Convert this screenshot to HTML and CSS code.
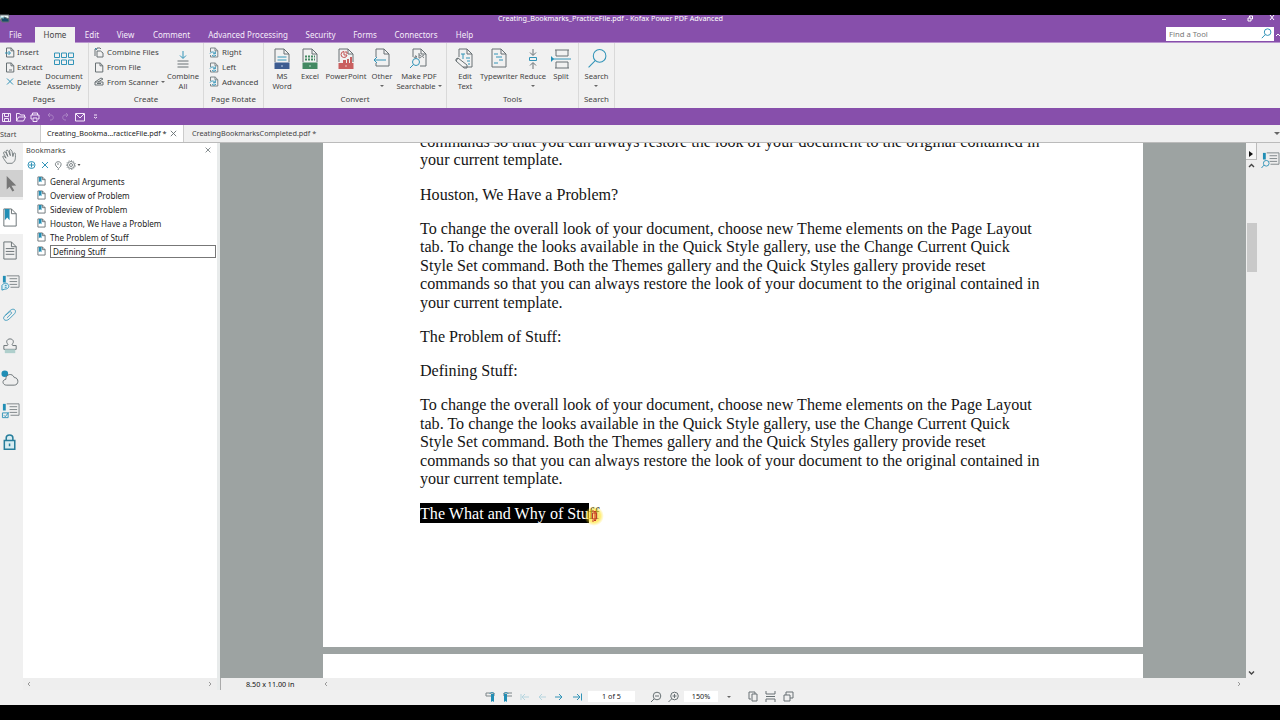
FILE: index.html
```html
<!DOCTYPE html>
<html lang="en">
<head>
    <meta charset="UTF-8">
    <meta name="viewport" content="width=device-width, initial-scale=1.0">
    <title>Creating_Bookmarks_PracticeFile.pdf - Kofax Power PDF Advanced</title>
    <link rel="stylesheet" href="styles.css">
</head>
<body>
    <!-- Shared icons -->
    <svg class="defs" width="0" height="0">
        <symbol id="page" viewBox="0 0 10 11"><path d="M1.5 1h4.7l2.6 2.6V10H1.5zM6 1v2.8h2.8"/></symbol>
        <symbol id="cross" viewBox="0 0 10 10"><path d="M2 2l6 6M8 2L2 8"/></symbol>
        <symbol id="lens" viewBox="0 0 20 20"><circle cx="12" cy="7.5" r="6"/><path d="M7.8 12L1.5 18.5"/></symbol>
        <symbol id="bookmark" viewBox="0 0 10 11"><path d="M1 1h5l3 3v6H1zM6 1v3h3"/><path class="solid" d="M2 1h3v6L3.500 5.700 2 7z"/></symbol>
        <symbol id="rotate" viewBox="0 0 10 11"><path class="grey" d="M1.500 5V1h4.700l2.600 2.600V10H1.500V8M6 1v2.800h2.800"/><path class="blue" d="M1 6.500c1-2 4-2 5 0M6.300 4.300v2.500H4M7 8c-1 1.500-3 1.500-4 .2"/></symbol>
        <symbol id="panel" viewBox="0 0 20 18"><path class="grey" d="M6 2h13v12h-9M9 5h8M9 8h8M9 11h8"/><path class="solid" d="M2 2h3v7H2z"/></symbol>
    </svg>

    <div class="window">
        <header class="titlebar">
            <svg class="app-logo" viewBox="0 0 10 8"><path fill="#e8f4f6" d="M0 0h9v3L7 5H0z"/><path fill="#174c68" d="M1 4l3-2 5 2v3H2z"/><path stroke="#9cd7e0" d="M0 2l4 1"/></svg>
            <div class="title">Creating_Bookmarks_PracticeFile.pdf - Kofax Power PDF Advanced</div>
            <svg class="window-buttons" viewBox="0 0 60 8"><path d="M2 4.500h4M28 3h3v3h-3zM29.500 2.500V1h3v3h-1M50 0l4 5M54 0l-4 5"/></svg>
        </header>

        <nav class="menu">
            <a class="m-file">File</a>
            <a class="m-home active">Home</a>
            <a class="m-edit">Edit</a>
            <a class="m-view">View</a>
            <a class="m-comment">Comment</a>
            <a class="m-adv">Advanced Processing</a>
            <a class="m-sec">Security</a>
            <a class="m-forms">Forms</a>
            <a class="m-conn">Connectors</a>
            <a class="m-help">Help</a>
            <div class="find"><span>Find a Tool</span><svg class="blue" viewBox="0 0 20 20"><use href="#lens"/></svg></div>
            <svg class="collapse" viewBox="0 0 5 5"><path d="M1 4l2-2 2 2"/></svg>
        </nav>

        <div class="ribbon">
            <section class="group g-pages">
                <div class="tools">
                    <div class="stack">
                        <span><svg class="s"><use href="#page"/><path class="blue" d="M0 6h5M3.500 4l2 2-2 2"/></svg>Insert</span>
                        <span><svg class="s"><use href="#page"/><path d="M4 8h3"/></svg>Extract</span>
                        <span><svg class="s blue"><use href="#cross"/></svg>Delete</span>
                    </div>
                    <div class="big w40">
                        <svg class="blue" viewBox="0 0 22 22"><path d="M1.500 5h5v4.500h-5zM8.500 5h5v4.500h-5zM15.500 5h5v4.500h-5zM1.500 12h5v4.500h-5zM8.500 12h5v4.500h-5zM15.500 12h5v4.500h-5z"/></svg>
                        <span>Document<br>Assembly</span>
                    </div>
                </div>
                <h2>Pages</h2>
            </section>
            <section class="group g-create">
                <div class="tools">
                    <div class="stack">
                        <span><svg class="s"><path d="M1 9V2h2V1h3l1 1M3 10V4h3.500L9 6v4z"/><path class="blue" d="M1 1l2 2"/></svg>Combine Files</span>
                        <span><svg class="s"><use href="#page"/></svg>From File</span>
                        <span><svg class="s"><path d="M1 6l6-4 2 1-5 3M1 6h8v3H1zM3 7.500h4"/></svg>From Scanner<i class="drop"></i></span>
                    </div>
                    <div class="big w36">
                        <svg viewBox="0 0 22 22"><path class="blue" d="M11 3v7M8 7.500l3 3 3-3"/><path d="M5.500 13h11M5.500 16h11M5.500 19h11"/></svg>
                        <span>Combine<br>All</span>
                    </div>
                </div>
                <h2>Create</h2>
            </section>
            <section class="group g-rotate">
                <div class="tools">
                    <div class="stack">
                        <span><svg class="s"><use href="#rotate"/></svg>Right</span>
                        <span><svg class="s"><use href="#rotate"/></svg>Left</span>
                        <span><svg class="s"><use href="#rotate"/></svg>Advanced</span>
                    </div>
                </div>
                <h2>Page Rotate</h2>
            </section>
            <section class="group g-convert">
                <div class="tools">
                    <div class="big w26">
                        <svg viewBox="0 0 22 22"><path d="M4 14V1h9l5 5v8M13 1v5h5"/><path class="blue" d="M6.500 9h9M6.500 12h9"/><path fill="#3d5c91" stroke="none" d="M3.500 14.500h15V21h-15z"/><path stroke="#b8cbe6" d="M10 18h2"/></svg>
                        <span>MS<br>Word</span>
                    </div>
                    <div class="big w30">
                        <svg viewBox="0 0 22 22"><path d="M4 14V1h9l5 5v8M13 1v5h5"/><path stroke="#438962" stroke-width="2" stroke-dasharray="2 1" d="M6 8.500h10M6 11.500h10"/><path fill="#438962" stroke="none" d="M3.500 14.500h15V21h-15z"/><path stroke="#b8dfc8" d="M10 18h2"/></svg>
                        <span>Excel</span>
                    </div>
                    <div class="big w42">
                        <svg viewBox="0 0 22 22"><path d="M4 14V1h9l5 5v8M13 1v5h5"/><path stroke="#c35252" d="M9 3.500a3 3 0 1 0 3 3.500H9zM11 3v2h2"/><path fill="#c96060" stroke="none" d="M3.500 15h15v6h-15zM12 11h2v4h-2zM15 9h2v6h-2zM8 12h3v3H8z"/><path stroke="#f0c5c5" d="M10 18h2"/></svg>
                        <span>PowerPoint</span>
                    </div>
                    <div class="big w30">
                        <svg viewBox="0 0 22 22"><path d="M5 9V1h8l5 5v12H5v-3M13 1v5h5"/><path class="blue" d="M15 12H3M6 9l-3 3 3 3"/></svg>
                        <span>Other<i class="drop below"></i></span>
                    </div>
                    <div class="big w44">
                        <svg viewBox="0 0 22 22"><path d="M5 9V1h8l5 5v12h-6M13 1v5h5"/><path stroke-width=".9" d="M7 8c2-1 2 2 0 2s0-2 2-1M11 5v5c3 0 3-3 0-3M16 7.500c-2-1-2 2 0 2"/><g class="blue"><circle cx="8" cy="14" r="3.500"/><path d="M5.500 16.500L2 20"/></g></svg>
                        <span>Make PDF<br>Searchable<i class="drop"></i></span>
                    </div>
                </div>
                <h2>Convert</h2>
            </section>
            <section class="group g-tools">
                <div class="tools">
                    <div class="big w26">
                        <svg viewBox="0 0 22 22"><path d="M5 9V1h8l5 5v13H9M13 1v5h5M2 11l2-1 9 7v3h-3l-8-7zM4 10l-2 3"/><path class="blue" d="M7 6h4M9 6v5M12 10h4M13 13h3M14 16h2"/></svg>
                        <span>Edit<br>Text</span>
                    </div>
                    <div class="big w42">
                        <svg viewBox="0 0 22 22"><path d="M4 1h9l5 5v13H4zM13 1v5h5"/><path class="blue" d="M6 6h4M8 9h6M11 12h4M6 15h4"/></svg>
                        <span>Typewriter</span>
                    </div>
                    <div class="big w26">
                        <svg viewBox="0 0 22 22"><path d="M11 1v6M8 4.500l3 3 3-3M11 21v-6M8 17.500l3-3 3 3"/><path class="blue" d="M7.500 9.500h7v3h-7z"/></svg>
                        <span>Reduce<i class="drop below"></i></span>
                    </div>
                    <div class="big w30">
                        <svg viewBox="0 0 22 22"><path d="M6 2v6h12V2M5 2h14M6 20v-6h12v6M5 20h14"/><path class="blue" d="M3 11h18"/><path class="solid" d="M1 8l3 3-3 3z"/></svg>
                        <span>Split</span>
                    </div>
                </div>
                <h2>Tools</h2>
            </section>
            <section class="group g-search">
                <div class="tools">
                    <div class="big w36">
                        <svg class="blue" viewBox="0 0 22 22"><use href="#lens" x="1" y="0" width="21" height="21"/></svg>
                        <span>Search<i class="drop below"></i></span>
                    </div>
                </div>
                <h2>Search</h2>
            </section>
        </div>

        <div class="quickbar">
            <svg viewBox="0 0 100 16"><path d="M2.500 5.500h8v8h-8zM4.500 5.500v3h4v-3M4.500 13.500v-3h4v3M16.500 13V5.500h3l1 1.500h4v2M16.500 13l2-4h7l-2 4zM32 11h-1V7h8v4h-1M32.500 7V5h5v2M33 10h4v3.500h-4zM75.500 5.500h9v7.500h-9zM76 6l4 4 4-4"/><path class="dim" d="M50 5l-2 2 2 2M48 7h3c3 0 3 5 0 5h-1M66 5l2 2-2 2M68 7h-3c-3 0-3 5 0 5h1"/><path d="M94 7h3M94 9l1.500 1.200L97 9"/></svg>
        </div>

        <div class="filetabs">
            <div class="start">Start</div>
            <div class="tab current">Creating_Bookma...racticeFile.pdf *<svg viewBox="0 0 10 10"><use href="#cross"/></svg></div>
            <div class="tab">CreatingBookmarksCompleted.pdf *</div>
            <i class="drop"></i>
        </div>

        <main class="workspace">
            <aside class="rail">
                <div class="hand"><svg viewBox="0 0 20 20"><path d="M7 18C5 15 3 13 2 10c1-1 2 0 4 2L3 6c0-2 2-2 3 0l2 4-2-6c0-2 2-2 3 0l2 5-1-6c1-2 2-1 3 1l1 6 1-4c2-1 2 1 2 3 0 6-1 7-4 9z"/></svg></div>
                <div class="picked"><svg viewBox="0 0 20 20"><path fill="#777" stroke="none" d="M6 2l10 10-5 .3 3 5-2 1-3-5-3 3z"/></svg></div>
                <div class="open"><svg viewBox="0 0 20 20"><path d="M3 1h8l5 5v13H3zM11 1v5h5"/><path class="solid" d="M4 1h5v12l-2.500-3L4 13z"/></svg></div>
                <div><svg viewBox="0 0 20 20"><path d="M3 1h8l5 5v13H3zM11 1v5h5M5 8h9M5 11h9M5 14h9"/></svg></div>
                <div><svg viewBox="0 0 20 18"><use href="#panel"/><path class="blue" fill="#dff1f6" d="M1 12c2-3 6-3 7 0 1 2-1 4-4 4l-3 1zM4 12h2M4 14h2"/></svg></div>
                <div class="clip"><svg class="blue" viewBox="0 0 20 20"><path d="M5 11l6-6c4-3 8 0 5 4l-6 6c-4 4-9 1-6-3l6-5c3-1 3 2 1 3l-4 4"/></svg></div>
                <div><svg viewBox="0 0 20 20"><path d="M6.500 9c2-1-.5-2-.5-4 0-4 7-4 7 0 0 2-2.500 3-.5 4H16v4H3V9z"/><path fill="#afcfcc" stroke="none" d="M4 13h11v4H4z"/></svg></div>
                <div><svg viewBox="0 0 20 20"><circle class="solid" cx="4" cy="5" r="3.500"/><path fill="#eee" d="M6 17c-5 0-5-6-1-6 0-6 7-7 9-2 5 0 5 8 0 8z"/></svg></div>
                <div><svg viewBox="0 0 20 18"><use href="#panel"/><path class="blue" fill="#eee" d="M1.500 11.500h6v5h-6zM3 14l1.500 1.500L8 11"/></svg></div>
                <div><svg class="lock" viewBox="0 0 20 20"><path d="M3.500 8h11v9h-11zM5.500 8V5c0-4 7-4 7 0v3M9 11v3"/></svg></div>
            </aside>

            <aside class="bookmarks">
                <div class="panel-title">Bookmarks<svg viewBox="0 0 10 10"><use href="#cross"/></svg></div>
                <div class="panel-tools">
                    <svg class="blue" viewBox="0 0 60 12"><circle cx="6.500" cy="6" r="3.500"/><path d="M4 6h5M6.500 3.500v5M17 3l6 6M23 3l-6 6"/><path class="grey" d="M31 7c-3-5 6-6 5-1-.5 3-2.500 2-3 5M31 7l2 2M33 4v2"/><g class="grey"><circle cx="46" cy="6" r="3.500"/><circle cx="46" cy="6" r="1.500"/><path stroke-dasharray="1 1.500" d="M46 1.500a4.500 4.500 0 1 1-.1 0"/></g><path fill="#555" stroke="none" d="M52.500 5h3L54 7z"/></svg>
                </div>
                <ul>
                    <li><svg><use href="#bookmark"/></svg>General Arguments</li>
                    <li><svg><use href="#bookmark"/></svg>Overview of Problem</li>
                    <li><svg><use href="#bookmark"/></svg>Sideview of Problem</li>
                    <li><svg><use href="#bookmark"/></svg>Houston, We Have a Problem</li>
                    <li><svg><use href="#bookmark"/></svg>The Problem of Stuff</li>
                    <li><svg><use href="#bookmark"/></svg><span class="rename">Defining Stuff</span></li>
                </ul>
                <div class="hscroll"><svg viewBox="0 0 6 8"><path d="M4 2L2 4l2 2"/></svg><svg viewBox="0 0 6 8"><path d="M2 2l2 2-2 2"/></svg></div>
            </aside>

            <div class="viewer">
                <div class="canvas">
                    <article class="sheet">
                        <p>commands so that you can always restore the look of your document to the original contained in<br>your current template.</p>
                        <p>Houston, We Have a Problem?</p>
                        <p>To change the overall look of your document, choose new Theme elements on the Page Layout<br>tab. To change the looks available in the Quick Style gallery, use the Change Current Quick<br>Style Set command. Both the Themes gallery and the Quick Styles gallery provide reset<br>commands so that you can always restore the look of your document to the original contained in<br>your current template.</p>
                        <p>The Problem of Stuff:</p>
                        <p>Defining Stuff:</p>
                        <p>To change the overall look of your document, choose new Theme elements on the Page Layout<br>tab. To change the looks available in the Quick Style gallery, use the Change Current Quick<br>Style Set command. Both the Themes gallery and the Quick Styles gallery provide reset<br>commands so that you can always restore the look of your document to the original contained in<br>your current template.</p>
                        <p class="last"><mark>The What and Why of Stu</mark>ff<span class="pointer"><svg viewBox="0 0 20 20"><path d="M8 5h2l1 1 1-1M8 15h2l1-1 1 1M8.500 7h4v6h-4zM11 6v8"/></svg></span></p>
                    </article>
                    <article class="sheet next"></article>
                </div>
                <div class="hscroll">
                    <span class="size">8.50 x 11.00 in</span>
                    <svg viewBox="0 0 6 8"><path d="M4 2L2 4l2 2"/></svg>
                    <svg class="end" viewBox="0 0 6 8"><path d="M2 2l2 2-2 2"/></svg>
                </div>
            </div>

            <div class="vscroll">
                <div class="toggle"><svg viewBox="0 0 10 12"><path class="black" d="M3 3l4 3-4 3z"/></svg></div>
                <svg class="arrow" viewBox="0 0 10 8"><path d="M3 5.500l2.500-2.500L8 5.500"/></svg>
                <div class="thumb"></div>
                <svg class="arrow down" viewBox="0 0 10 8"><path d="M3 3l2.500 2.500L8 3"/></svg>
            </div>
            <aside class="right-rail">
                <svg viewBox="0 0 20 18"><use href="#panel"/><g class="blue"><circle cx="5.500" cy="13" r="3" fill="#eee"/><path d="M3 15l-2.500 3"/></g></svg>
            </aside>
        </main>

        <footer class="status">
            <svg class="nav-icons" viewBox="0 0 104 14"><path class="grey" d="M2 3h8v3H2zM28 3h-8v3h8"/><path class="solid" d="M7 4h3v8l-1.500-1L7 12zM20 4h3v8l-1.500-1L20 12z"/><g class="blue"><path d="M6 4c0-2 4-2 4 0M20 4c0-2 4-2 4 0"/><path class="faint" d="M38 7h7M41 4l-3 3 3 3M37 4v6M55 7h7M58 4l-3 3 3 3"/><path d="M71 7h7M75 4l3 3-3 3M89 7h7M93 4l3 3-3 3M97.500 3.500v7"/></g></svg>
            <span class="field">1 of 5</span>
            <svg class="zoom-icons" viewBox="0 0 32 14"><circle cx="8" cy="6" r="3.800"/><path d="M5 9l-3 3M6 6h4"/><circle cx="25.500" cy="6" r="3.800"/><path d="M22.500 9l-3 3M23.500 6h4M25.500 4v4"/></svg>
            <span class="field zoom">150%</span>
            <i class="drop"></i>
            <svg class="view-icons" viewBox="0 0 46 14"><path d="M3 9H1V2h6v2M4 4h5v7H4zM18 1v3h9V1M18 6.500h9M18 12V9h9v3M36 5h6v6h-6zM38 5V2h7v6h-3"/></svg>
        </footer>
    </div>
</body>
</html>
```
FILE: styles.css
```css
* {
    box-sizing: border-box;
}

body {
    margin: 0;
    background: #000;
    overflow: hidden;
    font-family: "Noto Sans", "Open Sans", sans-serif;
    font-size: 8px;
    color: #444;
}

svg {
    flex: none;
    fill: none;
    stroke: #687174;
    stroke-width: 1;
    overflow: visible;
}

.defs {
    position: absolute;
}

.blue {
    stroke: #3294b8;
}

.grey {
    stroke: #7d8588;
}

.solid {
    fill: #218eb5;
    stroke: none;
}

.black {
    fill: #111;
    stroke: none;
}

.window {
    display: flex;
    flex-direction: column;
    width: 1280px;
    height: 720px;
    padding: 15px 0;
}

/* small dropdown triangle */
.drop {
    display: inline-block;
    border: 2px solid transparent;
    border-top-color: #666;
    border-bottom: 0;
}

/* title bar */
.titlebar {
    display: flex;
    height: 12px;
    background: #874fab;
    color: #fff;
}

.app-logo {
    width: 10px;
    height: 8px;
}

.title {
    margin-left: 488px;
    font-size: 7.25px;
    line-height: 6px;
    white-space: nowrap;
}

.window-buttons {
    width: 60px;
    height: 8px;
    margin-left: auto;
    stroke: #fff;
}

/* menu row */
.menu {
    display: flex;
    height: 16px;
    background: #874fab;
    color: #f6edfa;
    line-height: 16px;
    text-align: center;
    border-bottom: 1px solid #b995cf;
}

.menu .active {
    height: 16px;
    background: #f1f1f1;
    color: #444;
}

.m-file { width: 31px; margin-right: 4px; }
.m-home { width: 40px; }
.m-edit { width: 34px; }
.m-view { width: 33px; }
.m-comment { width: 59px; }
.m-adv { width: 94px; }
.m-sec { width: 51px; }
.m-forms { width: 38px; }
.m-conn { width: 64px; }
.m-help { width: 33px; }

.find {
    display: flex;
    justify-content: space-between;
    width: 108px;
    height: 14px;
    margin-left: auto;
    padding: 0 2px 0 3px;
    background: #fff;
    color: #777;
    line-height: 14px;
    font-size: 7.7px;
}

.find svg {
    width: 11px;
    height: 11px;
    margin-top: 1px;
    stroke-width: 1.8;
}

.collapse {
    width: 5px;
    height: 5px;
    margin: 5px 0 0 1px;
    stroke: #fff;
}

/* ribbon */
.ribbon {
    display: flex;
    height: 65px;
    background: #f1f1f1;
}

.group {
    display: flex;
    flex-direction: column;
    padding-top: 3px;
    border-right: 1px solid #d9d9d9;
    white-space: nowrap;
}

.g-pages { width: 89px; padding-left: 5px; }
.g-create { width: 115px; padding-left: 5px; }
.g-rotate { width: 60px; padding-left: 5px; }
.g-convert { width: 183px; padding-left: 5px; }
.g-tools { width: 132px; padding-left: 5px; }
.g-search { width: 36px; }

.tools {
    display: flex;
    height: 47px;
}

.group h2 {
    margin: 0;
    padding-right: 5px;
    font-size: 7.9px;
    font-weight: normal;
    line-height: 13px;
    text-align: center;
}

.g-search h2 {
    padding-right: 0;
}

.stack {
    display: flex;
    flex-direction: column;
    width: 39px;
    margin-top: -1px;
    font-size: 7.9px;
}

.g-create .stack {
    width: 71px;
}

.stack span {
    display: flex;
    align-items: center;
    height: 14.8px;
}

.stack .drop {
    margin-left: 3px;
}

.s {
    width: 10px;
    height: 11px;
    margin-right: 3px;
}

.g-pages .s {
    margin-right: 2px;
}

.big {
    display: flex;
    flex-direction: column;
    align-items: center;
    line-height: 10px;
    text-align: center;
    font-size: 7.6px;
}

.big svg {
    width: 22px;
    height: 22px;
    margin: 2px 0 1px;
}

.big .drop {
    margin-left: 2px;
    vertical-align: 2px;
}

.big .below {
    display: block;
    width: 4px;
    margin: 4px auto 0;
}

.w26 { width: 26px; }
.w30 { width: 30px; }
.w36 { width: 36px; }
.w40 { width: 40px; }
.w42 { width: 42px; }
.w44 { width: 44px; }

/* quick access toolbar */
.quickbar {
    height: 17px;
    background: #874fab;
}

.quickbar svg {
    display: block;
    width: 100px;
    height: 16px;
    stroke: #f4e8fa;
}

.quickbar .dim {
    stroke: #aa83c4;
}

/* open files */
.filetabs {
    display: flex;
    align-items: center;
    height: 18px;
    background: #f0f0f0;
    border-bottom: 1px solid #bbb;
    font-size: 7.25px;
}

.start {
    width: 40px;
}

.tab {
    height: 17px;
    padding: 0 8px;
    line-height: 17px;
    white-space: nowrap;
}

.tab.current {
    display: flex;
    align-items: center;
    justify-content: space-between;
    width: 144px;
    padding: 0 5px 0 6px;
    background: #fff;
    border: solid #ccc;
    border-width: 0 1px;
    color: #222;
}

.tab svg {
    width: 9px;
    height: 9px;
}

.filetabs > .drop {
    margin-left: auto;
    border-width: 3px 3px 0;
}

/* workspace */
.workspace {
    display: flex;
    height: 547px;
    background: #eee;
}

.rail {
    width: 23px;
    background: #f0f0f0;
}

.rail div {
    display: flex;
    align-items: center;
    height: 32px;
    padding-left: 1px;
}

.rail svg {
    width: 19px;
    height: 19px;
}

.rail .hand {
    height: 27px;
}

.rail .hand svg,
.rail .clip svg {
    width: 17px;
    height: 17px;
}

.rail .picked {
    height: 27px;
    background: #d0d0d0;
    margin-bottom: 3px;
}

.rail .open {
    background: #fff;
    height: 34px;
}

.rail .lock {
    stroke: #267d9b;
    stroke-width: 1.6;
    fill: #d8edf2;
}

/* bookmarks panel */
.bookmarks {
    display: flex;
    flex-direction: column;
    width: 197px;
    background: #fff;
    border-right: 3px solid #e8ebeb;
}

.panel-title {
    display: flex;
    justify-content: space-between;
    padding: 0 5px 0 3px;
    line-height: 14px;
    font-size: 7.3px;
    letter-spacing: .1px;
}

.panel-title svg {
    width: 8px;
    height: 8px;
    margin-top: 3px;
}

.panel-tools {
    height: 16px;
    padding: 2px 0 0 2px;
}

.panel-tools svg {
    display: block;
    width: 60px;
    height: 12px;
}

.bookmarks ul {
    flex: 1;
    margin: 0;
    padding: 1px 1px 0 14px;
    list-style: none;
    color: #222;
    font-size: 8.15px;
}

.bookmarks li {
    display: flex;
    align-items: center;
    height: 14px;
    white-space: nowrap;
}

.bookmarks li svg {
    width: 9px;
    height: 10px;
    margin-right: 4px;
}

.rename {
    flex: 1;
    height: 13px;
    padding-left: 2px;
    border: 1px solid #777;
    line-height: 11px;
}

.hscroll {
    display: flex;
    align-items: center;
    justify-content: space-between;
    height: 12px;
    padding: 0 4px 0 3px;
    background: #eee;
}

.hscroll svg {
    width: 6px;
    height: 8px;
    stroke: #999;
}

/* document */
.viewer {
    width: 1026px;
}

.canvas {
    height: 535px;
    padding: 0 103px;
    background: #9da3a2;
    overflow: hidden;
}

.sheet {
    display: flex;
    flex-direction: column;
    justify-content: flex-end;
    height: 504px;
    padding: 0 97px 124px;
    background: #fff;
    overflow: hidden;
    color: #151515;
    font-family: "Liberation Serif", "Times New Roman", serif;
    font-size: 16.1px;
    line-height: 18.5px;
}

.sheet p {
    flex: none;
    margin: 0 0 15.7px;
    white-space: nowrap;
}

.sheet .last {
    position: relative;
    margin: 0;
}

.sheet.next {
    height: 40px;
    margin-top: 7px;
    padding: 0;
}

mark {
    padding: 2px 0 1px;
    background: #000;
    color: #fff;
}

/* highlighted text cursor */
.pointer {
    position: absolute;
    left: 164px;
    top: 1px;
    width: 20px;
    height: 20px;
    border-radius: 50%;
    background: radial-gradient(circle, rgba(255, 196, 60, .7), rgba(255, 225, 30, .6) 45%, rgba(255, 235, 150, 0) 70%);
}

.pointer svg {
    display: block;
    stroke: #c43928;
}

.viewer .hscroll {
    justify-content: flex-start;
    padding-left: 25px;
    border-left: 1px solid #aaa;
}

.size {
    width: 77px;
    padding-bottom: 1px;
    color: #111;
    font-size: 7.2px;
}

.hscroll .end {
    margin-left: auto;
}

.vscroll {
    display: flex;
    flex-direction: column;
    width: 11px;
    height: 535px;
}

.toggle {
    height: 17px;
    padding-top: 5px;
    border: solid #bbb;
    border-width: 0 1px 1px 0;
    background: #f5f5f5;
}

.toggle svg {
    display: block;
    width: 10px;
    height: 12px;
}

.arrow {
    width: 10px;
    height: 11px;
    stroke: #444;
    stroke-width: 1.4;
}

.thumb {
    height: 49px;
    margin: 52px 0 0 1px;
    background: #c9c9c9;
}

.down {
    margin-top: auto;
}

.right-rail {
    width: 23px;
    padding: 8px 0 0 4px;
}

.right-rail svg {
    width: 19px;
    height: 17px;
}

/* status bar */
.status {
    display: flex;
    align-items: center;
    height: 15px;
    padding: 0 0 2px 484px;
    background: #f0f0f0;
    color: #222;
    font-size: 7.2px;
}

.status svg {
    height: 14px;
}

.nav-icons { width: 104px; }
.zoom-icons { width: 32px; margin-left: 14px; }
.view-icons { width: 46px; margin-left: 17px; }

.faint {
    stroke: #b6d5df;
}

.field {
    width: 47px;
    height: 11px;
    background: #fff;
    line-height: 11px;
    text-align: center;
}

.zoom {
    width: 34px;
    margin: 0 9px 0 3px;
}
```
